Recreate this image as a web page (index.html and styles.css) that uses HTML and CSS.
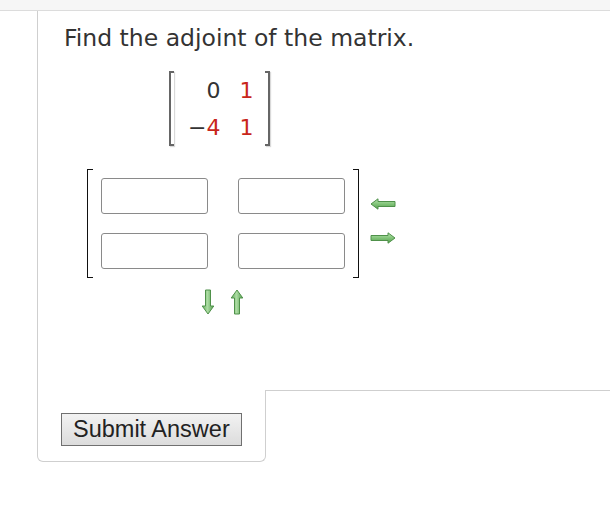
FILE: index.html
```html
<!DOCTYPE html>
<html lang="en">
<head>
    <meta charset="UTF-8">
    <meta name="viewport" content="width=device-width, initial-scale=1.0">
    <title>Adjoint of a matrix</title>
    <link rel="stylesheet" href="styles.css">
</head>
<body>
    <div class="topbar"></div>

    <div class="wrap">
        <div class="question">
            <p class="prompt">Find the adjoint of the matrix.</p>

            <!-- given matrix -->
            <div class="given">
                <span class="brk brk-l"></span>
                <div class="cells">
                    <span>0</span><span class="red">1</span>
                    <span>&minus;<span class="red">4</span></span><span class="red">1</span>
                </div>
                <span class="brk brk-r"></span>
            </div>

            <!-- answer matrix -->
            <div class="answer">
                <div class="amatrix">
                    <span class="abrk abrk-l"></span>
                    <div class="inputs">
                        <input type="text" class="cell">
                        <input type="text" class="cell">
                        <input type="text" class="cell">
                        <input type="text" class="cell">
                    </div>
                    <span class="abrk abrk-r"></span>
                </div>

                <div class="side-arrows">
                    <svg class="harrow" width="26" height="12" viewBox="0 0 26 12">
                        <defs>
                            <linearGradient id="gh" x1="0" y1="0" x2="0" y2="1">
                                <stop offset="0" stop-color="#b9e3b1"/>
                                <stop offset="0.5" stop-color="#82c479"/>
                                <stop offset="1" stop-color="#559f4e"/>
                            </linearGradient>
                        </defs>
                        <path d="M1 6 L8 0.8 L8 3.5 L25 3.5 L25 8.5 L8 8.5 L8 11.2 Z" fill="url(#gh)" stroke="#4f914a" stroke-width="1" stroke-linejoin="round"/>
                    </svg>
                    <svg class="harrow" width="26" height="12" viewBox="0 0 26 12">
                        <path d="M25 6 L18 0.8 L18 3.5 L1 3.5 L1 8.5 L18 8.5 L18 11.2 Z" fill="url(#gh)" stroke="#4f914a" stroke-width="1" stroke-linejoin="round"/>
                    </svg>
                </div>

                <div class="vert-arrows">
                    <svg class="varrow" width="14" height="26" viewBox="0 0 14 26">
                        <defs>
                            <linearGradient id="gv" x1="0" y1="0" x2="1" y2="0">
                                <stop offset="0" stop-color="#64ad5c"/>
                                <stop offset="0.45" stop-color="#acdca3"/>
                                <stop offset="1" stop-color="#559f4e"/>
                            </linearGradient>
                        </defs>
                        <path d="M4.5 1 L9.5 1 L9.5 17 L12.8 17 L7 25 L1.2 17 L4.5 17 Z" fill="url(#gv)" stroke="#4f914a" stroke-width="1" stroke-linejoin="round"/>
                    </svg>
                    <svg class="varrow" width="14" height="26" viewBox="0 0 14 26">
                        <path d="M4.5 25 L9.5 25 L9.5 9 L12.8 9 L7 1 L1.2 9 L4.5 9 Z" fill="url(#gv)" stroke="#4f914a" stroke-width="1" stroke-linejoin="round"/>
                    </svg>
                </div>
            </div>
        </div>

        <div class="footer">
            <div class="submit-box">
                <button class="submit">Submit Answer</button>
            </div>
            <div class="rest"></div>
        </div>
    </div>
</body>
</html>
```

FILE: styles.css
```css
* {
    margin: 0;
    padding: 0;
    box-sizing: border-box;
}
body {
    background: #fff;
    font-family: "DejaVu Sans", Verdana, sans-serif;
    color: #333;
}
/* grey strip at the top */
.topbar {
    height: 11px;
    background: #f6f6f6;
    border-bottom: 1px solid #dcdcdc;
}
.wrap {
    margin-left: 37px;
}
.question {
    height: 379px;
    border-left: 1px solid #cfcfcf;
    padding: 13px 0 0 26px;
}
.prompt {
    font-size: 23.5px;
    line-height: 28px;
    color: #333;
}
/* given matrix */
.given {
    display: flex;
    margin: 19px 0 0 105px;
    width: max-content;
}
.brk {
    width: 5px;
    border: 2px solid #666;
    box-shadow: 1px 1px 1px rgba(0, 0, 0, .15);
}
.brk-l {
    border-right: none;
}
.brk-r {
    border-left: none;
}
.cells {
    display: grid;
    grid-template-columns: auto auto;
    column-gap: 19px;
    padding: 1px 12px 0 14px;
    font-size: 22px;
    line-height: 37px;
    text-align: right;
    color: #333;
}
.red {
    color: #c8261b;
}
/* answer matrix */
.answer {
    display: grid;
    grid-template-columns: auto auto;
    column-gap: 11px;
    margin: 23px 0 0 23px;
    width: max-content;
}
.amatrix {
    display: flex;
}
.abrk {
    width: 6px;
    border: 1.5px solid #111;
}
.abrk-l {
    border-right: none;
}
.abrk-r {
    border-left: none;
}
.inputs {
    display: grid;
    grid-template-columns: 107px 107px;
    column-gap: 30px;
    row-gap: 19px;
    padding: 9px 8px;
}
.cell {
    height: 36px;
    border: 1px solid #8a8a8a;
    border-radius: 3px;
    background: #fff;
}
.side-arrows {
    display: flex;
    flex-direction: column;
    justify-content: center;
    gap: 22px;
    padding-bottom: 6px;
}
.harrow, .varrow {
    display: block;
}
.vert-arrows {
    display: flex;
    justify-content: center;
    gap: 15px;
    margin-top: 11px;
    padding-right: 1px;
}
/* footer with the button */
.footer {
    display: flex;
}
.submit-box {
    width: 229px;
    border: 1px solid #cfcfcf;
    border-top: none;
    border-radius: 0 0 6px 6px;
    padding: 23px 0 15px 23px;
}
.submit {
    font-family: "Liberation Sans", Arial, sans-serif;
    font-size: 23.5px;
    line-height: 25px;
    padding: 3px 11px;
    color: #222;
    background: linear-gradient(#f2f2f2, #dcdcdc);
    border: 1px solid #707070;
    border-radius: 0;
}
.rest {
    flex: 1;
    border-top: 1px solid #cfcfcf;
}
```
